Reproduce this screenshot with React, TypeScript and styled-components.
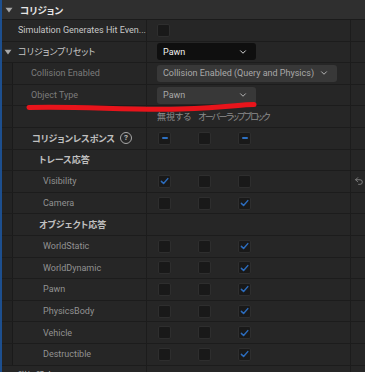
import React from 'react';
import styled, { createGlobalStyle } from 'styled-components';
import { ChevronDown, Undo2 } from 'lucide-react';

type Tri = 0 | 1 | 2; // 0 empty, 1 checked, 2 mixed

interface ResponseRow {
  name: string;
  values: Tri[];
  reset?: boolean;
}

const traceRows: ResponseRow[] = [
  { name: 'Visibility', values: [1, 0, 0], reset: true },
  { name: 'Camera', values: [0, 0, 1] },
];

const objectRows: ResponseRow[] = [
  'WorldStatic',
  'WorldDynamic',
  'Pawn',
  'PhysicsBody',
  'Vehicle',
  'Destructible',
].map((name) => ({ name, values: [0, 0, 1] as Tri[] }));

const Check: React.FC<{ state: Tri }> = ({ state }) => (
  <CheckBox>
    {state === 1 && (
      <svg width="12" height="12" viewBox="0 0 12 12">
        <polyline
          points="2.6,6.4 5,8.8 9.6,3.4"
          fill="none"
          stroke="#2c6cbd"
          strokeWidth="1.6"
          strokeLinecap="round"
          strokeLinejoin="round"
        />
      </svg>
    )}
    {state === 2 && <MixedDash />}
  </CheckBox>
);

const Caret = () => (
  <svg width="8" height="6" viewBox="0 0 8 6">
    <polygon points="0.5,0.8 7.5,0.8 4,5.4" fill="#a8a8a8" />
  </svg>
);

const App: React.FC = () => {
  const renderResponse = (row: ResponseRow) => (
    <Row key={row.name}>
      <LabelCell>
        <Gutter />
        <Label $indent={30} $tone="dim">
          {row.name}
        </Label>
      </LabelCell>
      <ValueCell>
        <CheckGroup>
          {row.values.map((v, i) => (
            <Check key={i} state={v} />
          ))}
        </CheckGroup>
      </ValueCell>
      <ResetCell>{row.reset && <Undo2 size={10} strokeWidth={2} color="#8c8c8c" />}</ResetCell>
    </Row>
  );

  return (
    <>
      <GlobalStyle />
      <Panel>
        <SectionHeader>
          <Caret />
          <span>コリジョン</span>
        </SectionHeader>

        <Row>
          <LabelCell>
            <Label $indent={16} $tone="bright">
              Simulation Generates Hit Even...
            </Label>
          </LabelCell>
          <ValueCell>
            <Check state={0} />
          </ValueCell>
          <ResetCell />
        </Row>

        <Row>
          <LabelCell>
            <GroupToggle>
              <Caret />
            </GroupToggle>
            <Label $indent={6} $tone="bright">
              コリジョンプリセット
            </Label>
          </LabelCell>
          <ValueCell>
            <Dropdown $variant="dark" $width={99}>
              <span>Pawn</span>
              <ChevronDown size={10} strokeWidth={2.4} color="#d8d8d8" />
            </Dropdown>
          </ValueCell>
          <ResetCell />
        </Row>

        <Row>
          <LabelCell>
            <Gutter />
            <Label $indent={18} $tone="muted">
              Collision Enabled
            </Label>
          </LabelCell>
          <ValueCell>
            <Dropdown $variant="flat" $width={180}>
              <span>Collision Enabled (Query and Physics)</span>
              <ChevronDown size={10} strokeWidth={2.4} color="#b4b4b4" />
            </Dropdown>
          </ValueCell>
          <ResetCell />
        </Row>

        <Row>
          <LabelCell>
            <Gutter />
            <Label $indent={18} $tone="muted">
              Object Type
            </Label>
          </LabelCell>
          <ValueCell>
            <Dropdown $variant="flat" $width={99}>
              <span>Pawn</span>
              <ChevronDown size={10} strokeWidth={2.4} color="#b4b4b4" />
            </Dropdown>
          </ValueCell>
          <ResetCell />
        </Row>

        <Row>
          <LabelCell>
            <Gutter />
          </LabelCell>
          <ValueCell>
            <ColumnTitles>
              <span>無視する</span>
              <Narrow>オーバーラップブロック</Narrow>
            </ColumnTitles>
          </ValueCell>
          <ResetCell />
        </Row>

        <Row>
          <LabelCell>
            <Gutter />
            <Label $indent={19} $tone="head">
              コリジョンレスポンス
            </Label>
            <HelpIcon>?</HelpIcon>
          </LabelCell>
          <ValueCell>
            <CheckGroup>
              <Check state={2} />
              <Check state={0} />
              <Check state={2} />
            </CheckGroup>
          </ValueCell>
          <ResetCell />
        </Row>

        <Row>
          <LabelCell>
            <Gutter />
            <Label $indent={26} $tone="head">
              トレース応答
            </Label>
          </LabelCell>
          <ValueCell />
          <ResetCell />
        </Row>

        {traceRows.map(renderResponse)}

        <Row>
          <LabelCell>
            <Gutter />
            <Label $indent={26} $tone="head">
              オブジェクト応答
            </Label>
          </LabelCell>
          <ValueCell />
          <ResetCell />
        </Row>

        {objectRows.map(renderResponse)}

        <Row>
          <LabelCell>
            <Label $indent={16} $tone="bright">
              詳細設定
            </Label>
          </LabelCell>
          <ValueCell />
          <ResetCell />
        </Row>

        <Scribble width="365" height="372" viewBox="0 0 365 372">
          <path
            d="M29 107.5 C 80 106, 130 110.5, 180 109 S 238 104.5, 254 104.5"
            fill="none"
            stroke="#e8141b"
            strokeWidth="5"
            strokeLinecap="round"
          />
        </Scribble>
      </Panel>
    </>
  );
};

const GlobalStyle = createGlobalStyle`
  html, body {
    margin: 0;
    padding: 0;
    background: #262626;
  }
  * {
    box-sizing: border-box;
  }
`;

const Panel = styled.div`
  position: relative;
  width: 365px;
  height: 372px;
  overflow: hidden;
  background: #262626;
  border-left: 2px solid #1d4f8f;
  font-family: Roboto, 'Noto Sans CJK JP', sans-serif;
  font-size: 9px;
  font-feature-settings: 'palt';
`;

const SectionHeader = styled.div`
  height: 20px;
  display: flex;
  align-items: center;
  gap: 7px;
  padding-left: 3px;
  background: #2f2f2f;
  border-bottom: 1px solid #1b1b1b;
  color: #e6e6e6;
  font-weight: 700;
  font-size: 9.5px;
`;

const Row = styled.div`
  height: 21.6px;
  display: grid;
  grid-template-columns: 145px 204px 14px;
  border-bottom: 1px solid #1c1c1c;
`;

const LabelCell = styled.div`
  display: flex;
  align-items: center;
  min-width: 0;
  border-right: 1px solid #1c1c1c;
  white-space: nowrap;
`;

const Gutter = styled.div`
  flex: none;
  width: 11px;
  height: 100%;
  background: #232323;
  border-right: 1px solid #1a1a1a;
`;

const GroupToggle = styled.div`
  flex: none;
  width: 10px;
  display: flex;
  justify-content: flex-end;
`;

const toneColor: Record<string, string> = {
  bright: '#c8c8c8',
  muted: '#7c7c7c',
  dim: '#929292',
  head: '#c0c0c0',
};

const Label = styled.span<{ $indent: number; $tone: string }>`
  padding-left: ${(p) => p.$indent}px;
  color: ${(p) => toneColor[p.$tone]};
  font-weight: ${(p) => (p.$tone === 'head' ? 700 : 400)};
`;

const HelpIcon = styled.span`
  flex: none;
  width: 12px;
  height: 12px;
  margin-left: 5px;
  border: 1.3px solid #a8a8a8;
  border-radius: 50%;
  color: #b8b8b8;
  font-size: 8px;
  font-weight: 700;
  display: flex;
  align-items: center;
  justify-content: center;
  line-height: 1;
`;

const ValueCell = styled.div`
  display: flex;
  align-items: center;
  padding-left: 10px;
  border-right: 1px solid #1c1c1c;
`;

const ResetCell = styled.div`
  display: flex;
  align-items: center;
  justify-content: center;
  padding-left: 1px;
`;

const Dropdown = styled.div<{ $variant: 'dark' | 'flat'; $width: number }>`
  width: ${(p) => p.$width}px;
  height: 17px;
  display: flex;
  align-items: center;
  justify-content: space-between;
  padding: 0 8px 0 6px;
  border-radius: 3px;
  background: ${(p) => (p.$variant === 'dark' ? '#0f0f0f' : '#383838')};
  color: ${(p) => (p.$variant === 'dark' ? '#f0f0f0' : '#a9a9a9')};
  font-size: 9px;
  white-space: nowrap;
`;

const CheckGroup = styled.div`
  display: grid;
  grid-template-columns: repeat(3, 40px);
  padding-left: 1px;
`;

const CheckBox = styled.span`
  width: 13px;
  height: 13px;
  display: flex;
  align-items: center;
  justify-content: center;
  background: #191919;
  border: 1px solid #2e2e2e;
  border-radius: 2px;
`;

const MixedDash = styled.span`
  width: 6px;
  height: 2px;
  border-radius: 1px;
  background: #2d6fc0;
`;

const ColumnTitles = styled.div`
  display: flex;
  gap: 7px;
  color: #8c8c8c;
  font-size: 9px;
  white-space: nowrap;
`;

const Narrow = styled.span`
  letter-spacing: -1.7px;
`;

const Scribble = styled.svg`
  position: absolute;
  left: -2px;
  top: 0;
  pointer-events: none;
`;

export default App;
